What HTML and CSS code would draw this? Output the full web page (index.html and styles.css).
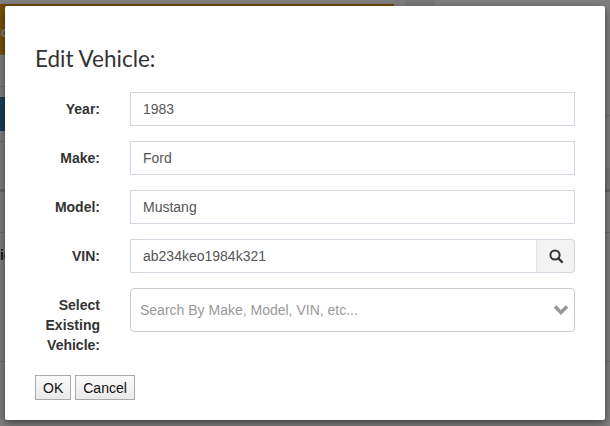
FILE: index.html
```html
<!DOCTYPE html>
<html lang="en">
<head>
    <meta charset="utf-8">
    <title>Edit Vehicle</title>
    <link rel="stylesheet" href="styles.css">
</head>
<body>
    <div class="page">
        <div class="banner"><span class="banner-text">Co</span></div>
        <div class="tab"></div>
        <div class="sidebar-btn"></div>
        <div class="side-panel"></div>
        <p class="peek">Vehicle</p>
        <hr class="rule rule-left rule-a">
        <hr class="rule rule-left rule-b">
        <hr class="rule rule-right rule-c">
        <hr class="rule rule-thick">
        <hr class="rule rule-d">
        <hr class="rule rule-e">
    </div>
    <div class="backdrop"></div>

    <div class="modal">
        <h2 class="modal-title">Edit Vehicle:</h2>

        <div class="row">
            <label class="row-label">Year:</label>
            <input class="field" type="text" value="1983">
        </div>
        <div class="row">
            <label class="row-label">Make:</label>
            <input class="field" type="text" value="Ford">
        </div>
        <div class="row">
            <label class="row-label">Model:</label>
            <input class="field" type="text" value="Mustang">
        </div>
        <div class="row">
            <label class="row-label">VIN:</label>
            <div class="input-group">
                <input class="field" type="text" value="ab234keo1984k321">
                <span class="addon">
                    <svg width="16" height="16" viewBox="0 0 16 16">
                        <circle cx="7" cy="7" r="4.6" fill="none" stroke="#333" stroke-width="2"></circle>
                        <path d="M10.4 10.4 L14 14" stroke="#333" stroke-width="2.4" stroke-linecap="round"></path>
                    </svg>
                </span>
            </div>
        </div>
        <div class="row row-select">
            <label class="row-label">Select Existing Vehicle:</label>
            <div class="select-box">
                <span class="placeholder">Search By Make, Model, VIN, etc...</span>
                <svg width="16" height="12" viewBox="0 0 16 12">
                    <path d="M2 2.5 L8 8.5 L14 2.5" fill="none" stroke="#999" stroke-width="3.6"></path>
                </svg>
            </div>
        </div>

        <div class="actions">
            <button class="btn" type="button">OK</button>
            <button class="btn" type="button">Cancel</button>
        </div>
    </div>
</body>
</html>
```

FILE: styles.css
```css
* { box-sizing: border-box; }
html, body { margin: 0; padding: 0; height: 100%; overflow: hidden; }
body { background: #fff; font: 14px "Liberation Sans", Arial, sans-serif; color: #333; }

/* page behind the dialog, only its edges show */
.page { position: relative; width: 610px; height: 426px; overflow: hidden; }
.banner { position: absolute; left: 0; top: 4px; width: 394px; height: 51px; background: #f0a30a; border-top: 2px solid #e09000; }
.banner-text { position: absolute; left: -9px; top: 18px; color: #fff; font-weight: bold; }
.tab { position: absolute; left: 405px; top: 0; width: 30px; height: 6px; background: #eee; }
.sidebar-btn { position: absolute; left: 0; top: 97px; width: 10px; height: 34px; background: #337ab7; }
.side-panel { position: absolute; right: 0; top: 168px; width: 10px; height: 22px; background: #eee; }
.peek { position: absolute; left: -25px; top: 247px; margin: 0; color: #333; font-weight: bold; }
.rule { position: absolute; left: 0; width: 100%; margin: 0; border: 0; border-top: 1px solid #ddd; }
.rule-left { width: 5px; }
.rule-right { left: auto; right: 0; width: 5px; }
.rule-a { top: 86px; }
.rule-b { top: 141px; }
.rule-c { top: 115px; }
.rule-thick { top: 189px; border-top: 3px solid #ccc; }
.rule-d { top: 232px; }
.rule-e { top: 361px; }

.backdrop { position: absolute; left: 0; top: 0; width: 100%; height: 100%; background: rgba(0, 0, 0, .5); }

.modal {
    position: absolute;
    left: 5px; top: 6px;
    width: 600px; height: 414px;
    padding: 38px 30px 0;
    background: #fff;
    border-radius: 2px;
    box-shadow: 0 3px 9px rgba(0, 0, 0, .5);
}
.modal-title {
    margin: 0 0 18px;
    font: 400 22.5px/30px "Lato", sans-serif;
    color: #333;
}

.row { display: flex; align-items: center; margin-bottom: 15px; }
.row-label { width: 65px; margin-right: 30px; font-weight: bold; text-align: right; line-height: 20px; flex: none; }
.field {
    flex: 1;
    min-width: 0;
    height: 34px;
    padding: 0 12px;
    border: 1px solid #d5d5e0;
    background: #fff;
    font: 14px "Liberation Sans", Arial, sans-serif;
    color: #555;
    outline: 0;
}

.input-group { flex: 1; display: flex; }
.addon {
    width: 39px;
    height: 34px;
    flex: none;
    display: flex;
    align-items: center;
    justify-content: center;
    background: #f3f3f3;
    border: 1px solid #d5d5e0;
    border-left: 1px solid #e4e4e4;
    border-radius: 0 4px 4px 0;
}
.input-group .field { border-right: 0; }

.row-select { align-items: flex-start; margin-bottom: 0; }
.row-select .row-label { margin-top: 7px; }
.select-box {
    flex: 1;
    height: 44px;
    display: flex;
    align-items: center;
    justify-content: space-between;
    padding: 0 5px 0 9px;
    border: 1px solid #ccc;
    border-radius: 4px;
}
.placeholder { color: #999; }

.actions { display: flex; gap: 4px; margin-top: 20px; }
.btn {
    height: 25px;
    padding: 0 7px;
    border: 1px solid #aaa;
    background: linear-gradient(#fafafa, #e9e9e9);
    font: 14px "Liberation Sans", Arial, sans-serif;
    color: #111;
}
```
